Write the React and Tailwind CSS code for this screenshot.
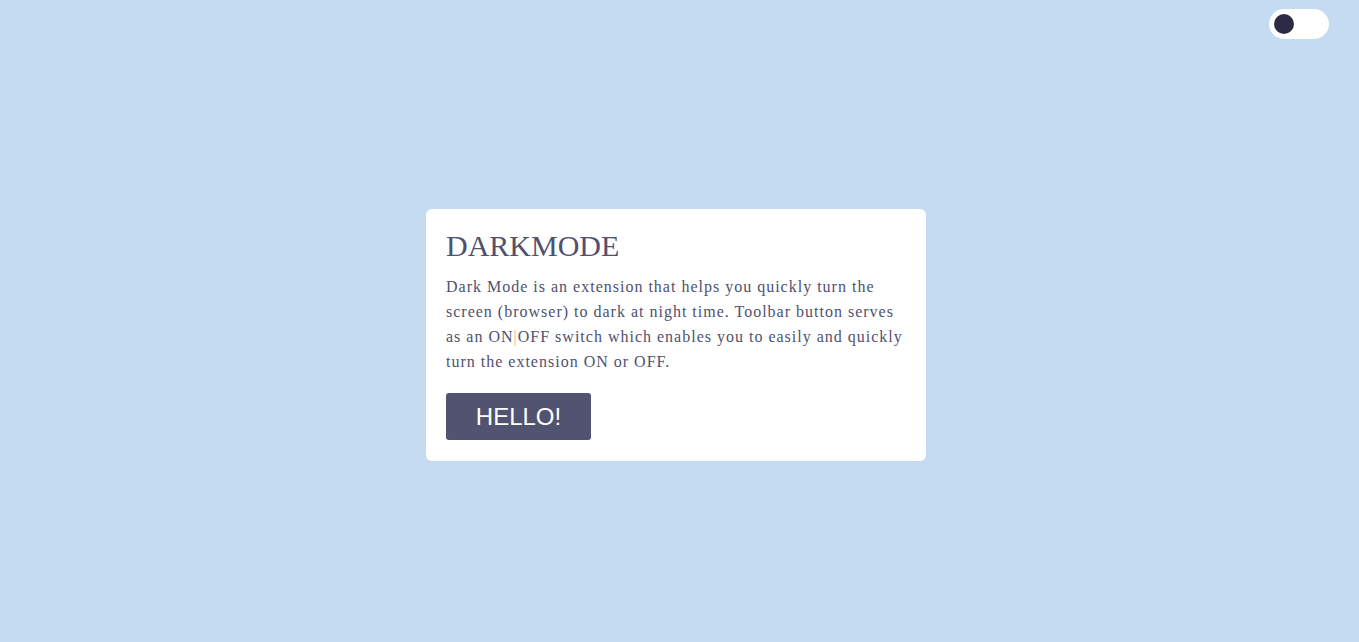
export default function App() {
  return (
    <div className="min-h-screen w-full bg-[#c4dbf1]">
      <div className="flex justify-end pt-[9px] pr-[30px]">
        <button
          type="button"
          className="flex h-[30px] w-[60px] items-center rounded-full bg-white pl-[5px]"
        >
          <span className="h-[20px] w-[20px] rounded-full bg-[#2d2a45]" />
        </button>
      </div>

      <div className="ml-[426px] mt-[170px] w-[500px] rounded-[6px] bg-white px-[20px] pt-[20px] pb-[21px] text-[#50516e]">
        <h1 className="font-['Liberation_Serif',serif] text-[30px] leading-[34px]">
          DARKMODE
        </h1>
        <p className="mt-[11px] font-['Liberation_Serif',serif] text-[16px] leading-[25px] tracking-[1px]">
          Dark Mode is an extension that helps you quickly turn the screen
          (browser) to dark at night time. Toolbar button serves as an ON
          <span className="text-[#e8b07c]">|</span>OFF switch which enables you
          to easily and quickly turn the extension ON or OFF.
        </p>
        <button
          type="button"
          className="mt-[19px] h-[47px] w-[145px] rounded-[3px] bg-[#515370] font-['Liberation_Sans',sans-serif] text-[24px] text-white"
        >
          HELLO!
        </button>
      </div>
    </div>
  );
}
